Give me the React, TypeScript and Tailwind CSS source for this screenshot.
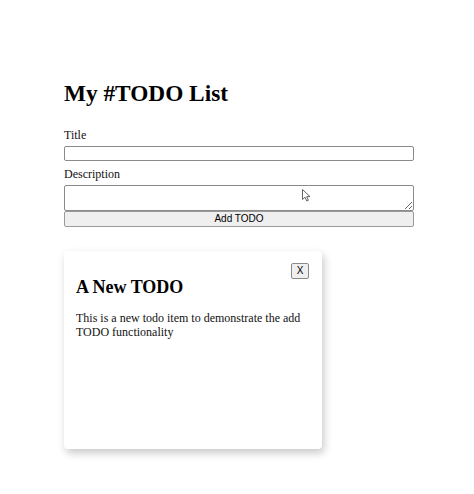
export default function App() {
  return (
    <div className="min-h-screen bg-white font-['Liberation_Serif',serif] text-[12px] text-[#111]">
      <div className="relative ml-[64px] w-[350px] pt-[80px]">
        <h1 className="text-[23.3px] font-bold leading-[27px] text-black">My #TODO List</h1>

        <form className="mt-[21px] flex flex-col" onSubmit={(e) => e.preventDefault()}>
          <label className="leading-[14px]">Title</label>
          <input
            type="text"
            className="mt-[4px] h-[15px] w-full rounded-[2px] border border-[#8a8a8a] bg-white"
          />
          <label className="mt-[6px] leading-[14px]">Description</label>
          <textarea className="mt-[4px] block h-[26px] w-full rounded-[2px] border border-[#8a8a8a] bg-white" />
          <button
            type="submit"
            className="h-[16px] w-full rounded-[2px] border border-[#9a9a9a] bg-[#efefef] font-['Liberation_Sans',sans-serif] text-[10px] leading-[14px] text-black"
          >
            Add TODO
          </button>
        </form>

        {/* mouse pointer caught in the capture */}
        <svg
          className="pointer-events-none absolute left-[238px] top-[189px]"
          width="9"
          height="13"
          viewBox="0 0 9 13"
        >
          <path d="M0.5 0.5 L0.5 10.5 L3 8.2 L4.8 12 L6.4 11.3 L4.7 7.6 L8 7.6 Z" fill="#fff" stroke="#555" strokeWidth="0.9" />
        </svg>

        <div className="mt-[24px] flex h-[198px] w-[258px] flex-col rounded-[4px] bg-white px-[12px] pt-[12px] shadow-[2px_4px_8px_rgba(0,0,0,0.22)]">
          <div className="flex items-start justify-between">
            <h2 className="mt-[14px] text-[18px] font-bold leading-[21px] text-black">A New TODO</h2>
            <button className="mr-[1px] h-[16px] w-[18px] rounded-[2px] border border-[#8a8a8a] bg-[#efefef] font-['Liberation_Sans',sans-serif] text-[10px] leading-[14px] text-black">
              X
            </button>
          </div>
          <p className="mt-[13px] leading-[14px]">
            This is a new todo item to demonstrate the add TODO functionality
          </p>
        </div>
      </div>
    </div>
  );
}
